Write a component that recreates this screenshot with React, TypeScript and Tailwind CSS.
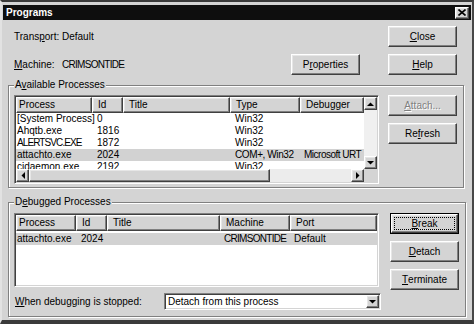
import React from "react";

const raised =
  "border border-t-white border-l-white border-r-[#404040] border-b-[#404040] shadow-[inset_-1px_-1px_0_#808080,inset_1px_1px_0_#e6e6e6]";
const sunken =
  "border border-t-[#808080] border-l-[#808080] border-r-white border-b-white shadow-[inset_1px_1px_0_#404040,inset_-1px_-1px_0_#d4d4d4]";

function Tri({ dir }: { dir: "up" | "down" | "left" | "right" }) {
  if (dir === "up")
    return (
      <svg width="7" height="4" viewBox="0 0 7 4">
        <polygon points="0,4 7,4 3.5,0.5" fill="#000" />
      </svg>
    );
  if (dir === "down")
    return (
      <svg width="7" height="4" viewBox="0 0 7 4">
        <polygon points="0,0 7,0 3.5,3.5" fill="#000" />
      </svg>
    );
  if (dir === "left")
    return (
      <svg width="4" height="7" viewBox="0 0 4 7">
        <polygon points="4,0 4,7 0.5,3.5" fill="#000" />
      </svg>
    );
  return (
    <svg width="4" height="7" viewBox="0 0 4 7">
      <polygon points="0,0 0,7 3.5,3.5" fill="#000" />
    </svg>
  );
}

function ScrollBtn({ dir }: { dir: "up" | "down" | "left" | "right" }) {
  return (
    <div className={`w-[13px] h-[13px] shrink-0 flex items-center justify-center bg-[#d4d4d4] ${raised}`}>
      <Tri dir={dir} />
    </div>
  );
}

function Btn({ children, disabled = false }: { children: React.ReactNode; disabled?: boolean }) {
  return (
    <div
      className={`w-[69px] h-[21px] shrink-0 flex items-center justify-center bg-[#d4d4d4] ${raised} ${
        disabled ? "text-[#808080] [text-shadow:1px_1px_0_#ffffff]" : "text-black"
      }`}
    >
      {children}
    </div>
  );
}

function DefaultBtn({ children }: { children: React.ReactNode }) {
  return (
    <div className="w-[69px] h-[21px] shrink-0 flex border border-black bg-[#d4d4d4]">
      <div className={`flex-1 flex p-[2px] ${raised}`}>
        <div className="flex-1 flex items-center justify-center border border-dotted border-black">
          {children}
        </div>
      </div>
    </div>
  );
}

function HeaderCell({ w, first = false, children }: { w: string; first?: boolean; children?: React.ReactNode }) {
  return (
    <div
      className={`${w} h-[16px] shrink-0 flex items-center bg-[#d4d4d4] overflow-hidden whitespace-nowrap ${raised} ${
        first ? "pl-[2px]" : "pl-[5px]"
      }`}
    >
      {children}
    </div>
  );
}

const avail = [
  ["[System Process]", "0", "", "Win32", ""],
  ["Ahqtb.exe", "1816", "", "Win32", ""],
  ["ALERTSVC.EXE", "1872", "", "Win32", ""],
  ["attachto.exe", "2024", "", "COM+, Win32", "Microsoft URT"],
  ["cidaemon.exe", "2192", "", "Win32", ""],
];

export default function App() {
  return (
    <div className="w-[474px] h-[324px] box-border overflow-hidden bg-[#d4d4d4] border-t-2 border-t-[#3a3a3a] border-l-2 border-l-[#e2e2e2] border-r-2 border-r-[#474747] border-b-4 border-b-[#3a3a3a] font-['Liberation_Sans',Arial,sans-serif] text-[10px] leading-[12px] text-black flex flex-col">
      {/* Title bar */}
      <div className="mt-[3px] ml-[1px] mr-[1px] h-[15px] bg-[#0e0e0e] flex items-center">
        <span className="pl-[3px] text-white font-bold text-[10px]">Programs</span>
        <div className={`ml-auto mr-[2px] w-[14px] h-[12px] flex items-center justify-center bg-[#d4d4d4] ${raised}`}>
          <svg width="8" height="7" viewBox="0 0 8 7">
            <path d="M0.5 0.5 L7.5 6.5 M7.5 0.5 L0.5 6.5" stroke="#000" strokeWidth="1.6" />
          </svg>
        </div>
      </div>

      <div className="pl-[6px] w-[462px] flex flex-col">
        {/* Row 1 */}
        <div className="mt-[6px] h-[21px] w-[456px] flex items-center">
          <span className="pl-[6px]">
            Trans<u>p</u>ort: Default
          </span>
          <div className="ml-auto mr-[7px]">
            <Btn>
              <u>C</u>lose
            </Btn>
          </div>
        </div>

        {/* Row 2 */}
        <div className="mt-[7px] h-[21px] w-[456px] flex items-center">
          <span className="pl-[6px] w-[54px]">
            <u>M</u>achine:
          </span>
          <span className="tracking-[-0.7px]">CRIMSONTIDE</span>
          <div className="ml-auto">
            <Btn>
              P<u>r</u>operties
            </Btn>
          </div>
          <div className="ml-[28px] mr-[7px]">
            <Btn>
              <u>H</u>elp
            </Btn>
          </div>
        </div>

        {/* Available Processes */}
        <fieldset className="mt-[4px] w-[456px] border border-[#808080] shadow-[inset_1px_1px_0_#ffffff,1px_1px_0_#ffffff] pl-[5px] pr-[6px] pt-[4px] pb-[3px]">
          <legend className="px-[1px] bg-[#d4d4d4] leading-[12px]">
            A<u>v</u>ailable Processes
          </legend>
          <div className="flex">
            <div className={`w-[365px] h-[89px] shrink-0 flex flex-col bg-white ${sunken} p-[1px]`}>
              <div className="flex">
                <div className="w-[348px] flex flex-col">
                  <div className="flex">
                    <HeaderCell w="w-[76px]" first>
                      Process
                    </HeaderCell>
                    <HeaderCell w="w-[31px]">Id</HeaderCell>
                    <HeaderCell w="w-[107px]">Title</HeaderCell>
                    <HeaderCell w="w-[70px]">Type</HeaderCell>
                    <HeaderCell w="w-[64px]">Debugger</HeaderCell>
                  </div>
                  <div className="h-[56px] overflow-hidden flex flex-col">
                    {avail.map((r, i) => (
                      <div
                        key={i}
                        className={`h-[12px] shrink-0 flex items-center whitespace-nowrap ${
                          i === 3 ? "bg-[#d2d2d2]" : "bg-white"
                        }`}
                      >
                        <div className={`w-[76px] shrink-0 pl-[1px] ${i === 2 ? "tracking-[-0.9px]" : ""}`}>{r[0]}</div>
                        <div className="w-[31px] shrink-0 pl-[5px]">{r[1]}</div>
                        <div className="w-[107px] shrink-0 pl-[5px]">{r[2]}</div>
                        <div className={`w-[70px] shrink-0 pl-[5px] ${i === 3 ? "tracking-[-0.4px]" : ""}`}>{r[3]}</div>
                        <div className="w-[64px] shrink-0 pl-[4px] tracking-[-0.5px]">{r[4]}</div>
                      </div>
                    ))}
                  </div>
                </div>
                <div className="w-[13px] h-[72px] flex flex-col bg-[#f0f0f0]">
                  <ScrollBtn dir="up" />
                  <div className="flex-1" />
                  <ScrollBtn dir="down" />
                </div>
              </div>
              <div className="flex h-[13px]">
                <ScrollBtn dir="left" />
                <div className={`w-[241px] h-[13px] bg-[#d4d4d4] ${raised}`} />
                <div className="w-[81px] h-[13px] bg-[#ececec]" />
                <ScrollBtn dir="right" />
                <div className="w-[13px] h-[13px] bg-[#d4d4d4]" />
              </div>
            </div>
            <div className="ml-[9px] flex flex-col gap-[7px]">
              <Btn disabled>
                <u>A</u>ttach...
              </Btn>
              <Btn>
                Re<u>f</u>resh
              </Btn>
            </div>
          </div>
        </fieldset>

        {/* Debugged Processes */}
        <fieldset className="mt-[8px] w-[456px] border border-[#808080] shadow-[inset_1px_1px_0_#ffffff,1px_1px_0_#ffffff] pl-[5px] pr-[6px] pt-[5px] pb-[6px]">
          <legend className="px-[1px] bg-[#d4d4d4] leading-[12px]">
            D<u>e</u>bugged Processes
          </legend>
          <div className="flex">
            <div className="flex flex-col">
              <div className={`w-[365px] h-[74px] shrink-0 flex flex-col bg-white ${sunken} p-[1px]`}>
                <div className="flex">
                  <HeaderCell w="w-[60px]" first>
                    Process
                  </HeaderCell>
                  <HeaderCell w="w-[31px]">Id</HeaderCell>
                  <HeaderCell w="w-[113px]">Title</HeaderCell>
                  <HeaderCell w="w-[70px]">Machine</HeaderCell>
                  <HeaderCell w="w-[87px]">Port</HeaderCell>
                </div>
                <div className="mt-[2px] h-[12px] flex items-center whitespace-nowrap bg-[#d2d2d2]">
                  <div className="w-[60px] shrink-0 pl-[1px]">attachto.exe</div>
                  <div className="w-[31px] shrink-0 pl-[5px]">2024</div>
                  <div className="w-[113px] shrink-0 pl-[5px]"></div>
                  <div className="w-[70px] shrink-0 pl-[4px] tracking-[-0.7px]">CRIMSONTIDE</div>
                  <div className="w-[87px] shrink-0 pl-[4px]">Default</div>
                </div>
              </div>
              <div className="mt-[6px] h-[17px] flex items-center">
                <span className="w-[150px] pl-[1px]">
                  <u>W</u>hen debugging is stopped:
                </span>
                <div className={`w-[217px] h-[17px] flex items-center bg-white ${sunken} pl-[2px] pr-[1px]`}>
                  <span className="flex-1 pl-[1px]">Detach from this process</span>
                  <div className={`w-[13px] h-[13px] flex items-center justify-center bg-[#d4d4d4] ${raised}`}>
                    <Tri dir="down" />
                  </div>
                </div>
              </div>
            </div>
            <div className="ml-[9px] flex flex-col gap-[7px]">
              <DefaultBtn>
                <u>B</u>reak
              </DefaultBtn>
              <Btn>
                <u>D</u>etach
              </Btn>
              <Btn>
                <u>T</u>erminate
              </Btn>
            </div>
          </div>
        </fieldset>
      </div>
    </div>
  );
}
